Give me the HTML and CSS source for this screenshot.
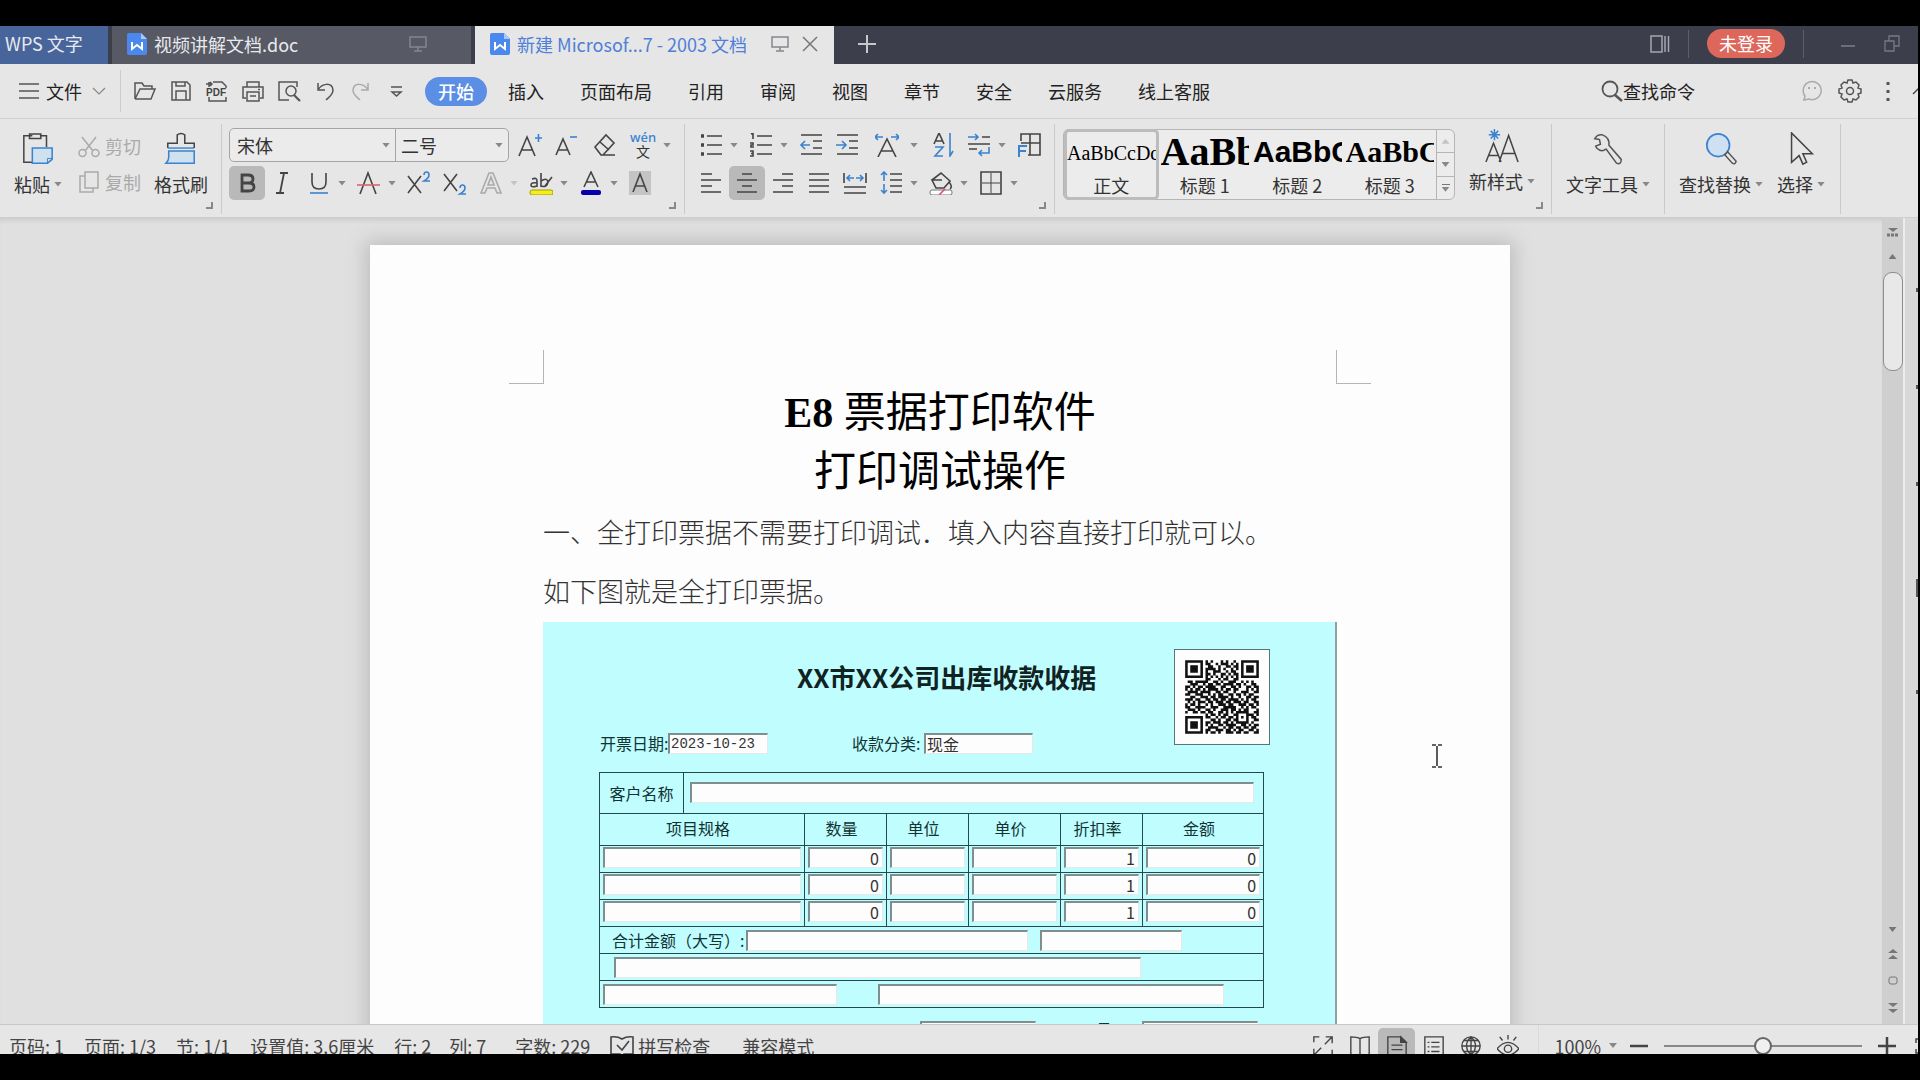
FILE: index.html
```html
<!DOCTYPE html>
<html lang="zh-CN">
<head>
<meta charset="utf-8">
<title>WPS 文字</title>
<link rel="stylesheet" href="styles.css">
</head>
<body>
<div class="app">
  <header class="titlebar">
    <button class="home-tab">WPS 文字</button>
    <div class="doc-tab">
      <svg class="wicon" viewBox="0 0 22 24"><path d="M3 1h12l6 6v14a2 2 0 0 1-2 2H3a2 2 0 0 1-2-2V3a2 2 0 0 1 2-2z" fill="#4a88ee"/><path d="M15 1v6h6z" fill="#a9c8fa"/><path d="M6 10v7l5-4 5 4v-7" fill="none" stroke="#fff" stroke-width="2"/></svg>
      <span class="tab-name">视频讲解文档.doc</span>
      <svg class="mon" viewBox="0 0 18 18"><path d="M1 2h16v10H1zM9 12v4M5 16h8"/></svg>
    </div>
    <div class="doc-tab active">
      <svg class="wicon" viewBox="0 0 22 24"><path d="M3 1h12l6 6v14a2 2 0 0 1-2 2H3a2 2 0 0 1-2-2V3a2 2 0 0 1 2-2z" fill="#4a88ee"/><path d="M15 1v6h6z" fill="#a9c8fa"/><path d="M6 10v7l5-4 5 4v-7" fill="none" stroke="#fff" stroke-width="2"/></svg>
      <span class="tab-name">新建 Microsof...7 - 2003 文档</span>
      <svg class="mon" viewBox="0 0 18 18"><path d="M1 2h16v10H1zM9 12v4M5 16h8"/></svg>
      <button class="plain" aria-label="关闭"><svg class="mon dark" viewBox="0 0 18 18"><path d="M2 2l14 14M16 2L2 16"/></svg></button>
    </div>
    <button class="plain new-tab" aria-label="新建"><svg width="18" height="18" viewBox="0 0 18 18"><path d="M9 0v18M0 9h18" stroke="#c6c7cd" stroke-width="2"/></svg></button>
    <div class="window-tools">
      <svg width="20" height="20" viewBox="0 0 20 20"><path d="M1 2h11v16H1zM15 2v16M18.500 2v16" fill="none" stroke="#a5a7b0" stroke-width="1.500"/></svg>
      <i class="vline"></i>
      <button class="login">未登录</button>
      <i class="vline"></i>
      <button class="plain" aria-label="最小化"><svg width="16" height="18" viewBox="0 0 16 18"><path d="M1 11h14" stroke="#7d7f89" stroke-width="1.500"/></svg></button>
      <button class="plain restore" aria-label="还原"><svg width="16" height="18" viewBox="0 0 16 18"><path d="M1 6h9v10H1zM5 6V1h10v10h-5" fill="none" stroke="#777984" stroke-width="1.300"/></svg></button>
    </div>
  </header>

  <nav class="menubar">
    <button class="file"><svg width="22" height="18" viewBox="0 0 22 18"><path d="M1 2h20M1 9h20M1 16h20" stroke="#555" stroke-width="1.500"/></svg>文件<svg class="chev" width="14" height="9" viewBox="0 0 14 9"><path d="M1 1l6 6 6-6" fill="none" stroke="#888" stroke-width="1.200"/></svg></button>
    <div class="quick">
      <button class="ico" aria-label="打开"><svg viewBox="0 0 24 24"><path d="M2 20V4h7l2 3h8v3M2 20h16l4-10H7L2 20"/></svg></button>
      <button class="ico" aria-label="保存"><svg viewBox="0 0 24 24"><path d="M3 3h15l3 3v15H3zM7 21v-9h10v9M7 3v4h9V3"/></svg></button>
      <button class="ico" aria-label="输出为PDF"><svg viewBox="0 0 24 24"><path d="M8 3h9l4 4v2M4 8V3M1 5h6M5 3l2 2-2 2M4 18v4h17v-4"/><text x="1" y="17" class="pdf">PDF</text></svg></button>
      <button class="ico" aria-label="打印"><svg viewBox="0 0 24 24"><path d="M6 8V3h12v5M5 19H2V8h20v11h-3M6 13h12v9H6zM9 17h6M17 10.500h2"/></svg></button>
      <button class="ico" aria-label="打印预览"><svg viewBox="0 0 24 24"><path d="M20 8V3H2v18h10"/><circle cx="14" cy="12" r="5"/><path d="M17 16l6 6" stroke-width="2.200"/></svg></button>
      <button class="ico" aria-label="撤销"><svg viewBox="0 0 24 24"><path d="M5 4v7h7M5 11C9 4 19 3 20 11c0 5-4 7-7 10"/></svg></button>
      <button class="ico faded" aria-label="重做"><svg viewBox="0 0 24 24"><path d="M19 4v7h-7M19 11C15 4 5 3 4 11c0 5 4 7 7 10"/></svg></button>
      <button class="ico" aria-label="更多"><svg viewBox="0 0 24 24"><path d="M6 8h11M7 13l4.500 4 4.500-4z"/></svg></button>
    </div>
    <div class="tabs">
      <button class="tab on">开始</button><button class="tab">插入</button><button class="tab">页面布局</button><button class="tab">引用</button><button class="tab">审阅</button><button class="tab">视图</button><button class="tab">章节</button><button class="tab">安全</button><button class="tab">云服务</button><button class="tab">线上客服</button>
    </div>
    <button class="search"><svg width="22" height="22" viewBox="0 0 22 22"><circle cx="9" cy="9" r="7.500" fill="none" stroke="#555" stroke-width="1.800"/><path d="M14 15l7 6" stroke="#555" stroke-width="2.500"/></svg>查找命令</button>
    <div class="menu-right">
      <button class="ico faded" aria-label="反馈"><svg viewBox="0 0 24 24"><path d="M4 21l1-4A9 9 0 1 1 9 20z"/><path d="M9 8v2M15 8v2" stroke-width="2"/></svg></button>
      <button class="ico" aria-label="设置"><svg viewBox="0 0 24 24"><path d="M10 1h4l1 3 3-1 3 3-1 3 3 1v4l-3 1 1 3-3 3-3-1-1 3h-4l-1-3-3 1-3-3 1-3-3-1v-4l3-1-1-3 3-3 3 1z"/><circle cx="12" cy="12" r="3.500"/></svg></button>
      <button class="ico" aria-label="更多选项"><svg viewBox="0 0 24 24"><path d="M12 3v3M12 11v3M12 19v3" stroke-width="3"/></svg></button>
      <svg class="edge" width="6" height="12" viewBox="0 0 6 12"><path d="M1 9l6-6" stroke="#444" stroke-width="1.500"/></svg>
    </div>
  </nav>

  <section class="ribbon">
    <div class="group clip">
      <button class="big"><svg viewBox="0 0 36 36"><path d="M12 4H3v28h9M20 4h7v12M9 2h12v5H9z" fill="none" stroke="#444" stroke-width="1.600"/><path d="M12 17h21v12l-5 4H12z" fill="#cfe0ee" stroke="#3b82cf" stroke-width="1.600"/><path d="M28 33v-5h5" fill="none" stroke="#3b82cf"/></svg><span>粘贴<i class="caret"></i></span></button>
      <div class="stack">
        <button class="small"><svg viewBox="0 0 24 24"><path d="M5 3l11 14M19 3L8 17"/><circle cx="5.500" cy="19" r="3.500"/><circle cx="18.500" cy="19" r="3.500"/></svg>剪切</button>
        <button class="small"><svg viewBox="0 0 24 24"><path d="M8 2h13v16H8zM8 6H3v16h13v-4"/></svg>复制</button>
      </div>
      <button class="big brush"><svg viewBox="0 0 36 36"><path d="M4 17v-5h10V3q4-3 8 0v9h10v5" fill="none" stroke="#444" stroke-width="1.600"/><path d="M5 20h27v13H2q3-3 3-6z" fill="#cfe0ee" stroke="#3b82cf" stroke-width="1.600"/><path d="M4 17h28" stroke="#3b82cf" stroke-width="1.500"/></svg><span>格式刷</span></button>
      <i class="launch"></i>
    </div>

    <div class="group font">
      <div class="row">
        <div class="combo">
          <label class="pick name"><select aria-label="字体"><option>宋体</option></select><i class="caret"></i></label>
          <label class="pick size"><select aria-label="字号"><option>二号</option></select><i class="caret"></i></label>
        </div>
        <button class="tool" aria-label="增大字号"><svg viewBox="0 0 24 24"><path d="M1 23L9 4l8 19M4 17h10"/><path class="b" d="M17 5h7M20.500 1v8"/></svg></button>
        <button class="tool" aria-label="减小字号"><svg viewBox="0 0 24 24"><path d="M2 22L9 6l7 16M4 17h10"/><path class="b" d="M16 4h7"/></svg></button>
        <button class="tool eraser" aria-label="清除格式"><svg viewBox="0 0 24 24"><path d="M2 14L13 2l8 8L10 22H8zM7 9l9 8M9 22h13"/></svg></button>
        <button class="tool" aria-label="拼音指南"><span class="pinyin"><small>wén</small><b>文</b></span><i class="caret"></i></button>
      </div>
      <div class="row">
        <button class="tool on" aria-label="加粗"><svg viewBox="0 0 24 24"><path d="M7 4h6q5 0 5 4t-5 4H7zM7 12h7q5 0 5 4t-5 4H7z" stroke-width="2.800"/></svg></button>
        <button class="tool" aria-label="倾斜"><svg viewBox="0 0 24 24"><path d="M9 2h8M5 22h8M13 2L9 22" stroke-width="1.800"/></svg></button>
        <button class="tool" aria-label="下划线"><svg viewBox="0 0 24 24"><path d="M5 2v9q0 7 7 7t7-7V2"/><path class="b" d="M3 22h18"/></svg><i class="caret"></i></button>
        <button class="tool" aria-label="删除线"><svg viewBox="0 0 24 24"><path d="M3 23L11 2l8 21"/><path d="M0 14h23" stroke="#d9666a"/></svg><i class="caret"></i></button>
        <button class="tool" aria-label="上标"><svg viewBox="0 0 24 24"><path d="M1 5l13 17M14 5L1 22"/><path class="b" d="M17 4q0-3 2.500-3T22 4t-5 6h6"/></svg></button>
        <button class="tool" aria-label="下标"><svg viewBox="0 0 24 24"><path d="M1 3l13 17M14 3L1 20"/><path class="b" d="M17 17q0-3 2.500-3t2.500 3-5 6h6"/></svg></button>
        <button class="tool faded" aria-label="文字效果"><svg viewBox="0 0 24 24"><path d="M2 22L10 2h4l8 20h-4l-2-5H8l-2 5zM9 14h6l-3-8z"/></svg><i class="caret"></i></button>
        <button class="tool" aria-label="突出显示"><svg viewBox="0 0 24 24"><path d="M3 8q5-2 5 2v6M8 12q-6-1-6 2t6 1M12 2v14M12 10q6-4 7 1-1 6-7 4M23 6l-7 9"/><rect x="1" y="19" width="23" height="5" rx="2" fill="#f5ee1d" stroke="#a29b00" stroke-width="1"/></svg><i class="caret"></i></button>
        <button class="tool" aria-label="字体颜色"><svg viewBox="0 0 24 24"><path d="M5 16l7-15 7 15M8 11h8"/><rect x="2" y="19" width="20" height="5" rx="2" fill="#0600a8" stroke="none"/></svg><i class="caret"></i></button>
        <button class="tool" aria-label="字符底纹"><svg viewBox="0 0 24 24"><path d="M0 0h22v24H0z" fill="#c4c4c4" stroke="none"/><path d="M4 21l7-18 7 18M6 15h10"/></svg></button>
      </div>
      <i class="launch"></i>
    </div>

    <div class="group para">
      <div class="row">
        <button class="tool" aria-label="项目符号"><svg viewBox="0 0 24 24"><path d="M8 3h15M8 12h15M8 21h15"/><path d="M2 3h3M2 12h3M2 21h3" stroke-width="3.500"/></svg><i class="caret"></i></button>
        <button class="tool" aria-label="编号"><svg viewBox="0 0 24 24"><path d="M8 3h15M8 12h15M8 21h15M2 1l2-1v6M1 10h3v2H2v2h3M1 18h3v5H1M2 20.500h2"/></svg><i class="caret"></i></button>
        <button class="tool" aria-label="减少缩进"><svg viewBox="0 0 24 24"><path d="M2 2h21M14 8h9M14 15h9M2 21h21"/><path class="b" d="M2 12h9M6 8l-4 4 4 4"/></svg></button>
        <button class="tool" aria-label="增加缩进"><svg viewBox="0 0 24 24"><path d="M2 2h21M14 8h9M14 15h9M2 21h21"/><path class="b" d="M1 12h9M7 8l4 4-4 4"/></svg></button>
        <button class="tool wide" aria-label="中文版式"><svg viewBox="0 0 24 24"><path d="M3 24l9-18 9 18M6 18h12"/><path class="b" d="M0 4h8M3 1L0 4l3 3M16 4h8M21 1l3 3-3 3"/></svg><i class="caret"></i></button>
        <button class="tool" aria-label="排序"><svg viewBox="0 0 24 24"><path d="M3 11l5-11 5 11M5 8h6"/><path class="b" d="M4 14h8l-8 9h8M19 0v23l3-5"/></svg></button>
        <button class="tool" aria-label="制表位"><svg viewBox="0 0 24 24"><path d="M15 4h8M1 11h22M2 16h8"/><path class="b" d="M1 4h10M8 1l3 3-3 3M22 14v6H12M15 17l-3 3 3 3"/></svg><i class="caret"></i></button>
        <button class="tool" aria-label="显示标记"><svg viewBox="0 0 24 24"><path d="M4 8V1h19v21H11M4 10h19M13 1v21"/><path class="b" d="M2 24V13h8M2 18h7" stroke-width="2"/></svg></button>
      </div>
      <div class="row">
        <button class="tool" aria-label="左对齐"><svg viewBox="0 0 24 24"><path d="M2 3h11M2 9h20M2 15h11M2 21h20"/></svg></button>
        <button class="tool on" aria-label="居中"><svg viewBox="0 0 24 24"><path d="M7 3h10M2 9h20M7 15h10M2 21h20"/></svg></button>
        <button class="tool" aria-label="右对齐"><svg viewBox="0 0 24 24"><path d="M11 3h11M2 9h20M11 15h11M2 21h20"/></svg></button>
        <button class="tool" aria-label="两端对齐"><svg viewBox="0 0 24 24"><path d="M2 3h20M2 9h20M2 15h20M2 21h20"/></svg></button>
        <button class="tool" aria-label="分散对齐"><svg viewBox="0 0 24 24"><path d="M1 2v10M23 2v10M1 16h22M1 22h22"/><path class="b" d="M4 7h7M7 4L4 7l3 3M13 7h7M17 4l3 3-3 3"/></svg></button>
        <button class="tool" aria-label="行距"><svg viewBox="0 0 24 24"><path d="M11 3h12M11 9h12M11 15h12M11 21h12"/><path class="b" d="M5 1v9M2 4l3-3 3 3M5 13v9M2 19l3 3 3-3"/></svg><i class="caret"></i></button>
        <button class="tool" aria-label="底纹颜色"><svg viewBox="0 0 24 24"><path d="M3 9L12 2l9 8-6 7H7L3 9h10M20 11q4 5 1 7"/><rect x="1" y="19" width="22" height="5" rx="2" fill="#fff" stroke="#777" stroke-width="1"/><path d="M10 24l6-6" stroke="#e0506a"/></svg><i class="caret"></i></button>
        <button class="tool" aria-label="边框"><svg viewBox="0 0 24 24"><path d="M2 1h20v22H2z"/><path d="M12 2v20M3 12h18" stroke-width="1"/></svg><i class="caret"></i></button>
      </div>
      <i class="launch"></i>
    </div>

    <div class="group styles">
      <div class="gallery">
        <button class="style sel"><b class="s0">AaBbCcDd</b><span>正文</span></button>
        <button class="style"><b class="s1">AaBb</b><span>标题 1</span></button>
        <button class="style"><b class="s2">AaBbC</b><span>标题 2</span></button>
        <button class="style"><b class="s3">AaBbC</b><span>标题 3</span></button>
        <div class="gscroll"><button aria-label="上一行"><i class="caret up"></i></button><button aria-label="下一行"><i class="caret"></i></button><button aria-label="展开"><i class="bar"></i><i class="caret"></i></button></div>
      </div>
      <button class="big"><svg viewBox="0 0 36 36"><path d="M1 35l8-20 8 20M4 28h10M15 35L25 7l10 28M18 26h14" fill="none" stroke="#444" stroke-width="1.600"/><path d="M10 0v12M4 6h12M6 2l8 8M14 2l-8 8" stroke="#3b82cf" stroke-width="1.600"/></svg><span>新样式<i class="caret"></i></span></button>
      <i class="launch"></i>
    </div>

    <div class="group">
      <button class="big"><svg viewBox="0 0 36 36"><path d="M12 3a8 8 0 0 0-8 4l5 1 1 5-5 2 1 2q5 5 10 1l11 15q5 2 5-4L19 14q1-8-7-11z" fill="none" stroke="#555" stroke-width="1.600"/></svg><span>文字工具<i class="caret"></i></span></button>
    </div>

    <div class="group find">
      <button class="big"><svg viewBox="0 0 36 36"><circle cx="15" cy="14" r="12" fill="#cfe0f2" stroke="#3b82cf" stroke-width="1.800"/><path d="M22 24l3-3 9 10q-1 4-4 2z" fill="none" stroke="#555" stroke-width="1.500"/></svg><span>查找替换<i class="caret"></i></span></button>
      <button class="big pick-btn"><svg viewBox="0 0 36 36"><path d="M8 1v31l8-7 4 9 4-2-4-9h10z" fill="none" stroke="#444" stroke-width="1.600"/></svg><span>选择<i class="caret"></i></span></button>
    </div>
  </section>

  <main class="work">
    <div class="canvas">
      <article class="page">
        <div class="corners"><i class="cl"></i><i class="cr"></i></div>
        <h1><b>E8</b> 票据打印软件<br>打印调试操作</h1>
        <p>一、全打印票据不需要打印调试．填入内容直接打印就可以。</p>
        <p>如下图就是全打印票据。</p>
        <section class="receipt">
          <div class="rhead">
            <div class="rinfo">
              <h2>XX市XX公司出库收款收据</h2>
              <div class="fields">
                <label for="date">开票日期:</label><input id="date" class="date" value="2023-10-23">
                <label for="kind" class="second">收款分类:</label><input id="kind" class="kind" value="现金">
              </div>
            </div>
            <svg class="qr" viewBox="-4 -4 37 37" aria-label="二维码"><path id="qr" fill="#111"/></svg>
          </div>
          <table>
            <colgroup><col class="c1"><col class="c2"><col class="c3"><col class="c4"><col class="c5"><col class="c6"><col class="c7"></colgroup>
            <tr class="cust"><th><label for="cust">客户名称</label></th><td colspan="6"><input id="cust"></td></tr>
            <tr class="heads"><th colspan="2">项目规格</th><th>数量</th><th>单位</th><th>单价</th><th>折扣率</th><th>金额</th></tr>
            <tr class="item"><td colspan="2"><input aria-label="项目规格"></td><td><input aria-label="数量" value="0"></td><td><input aria-label="单位"></td><td><input aria-label="单价"></td><td><input aria-label="折扣率" value="1"></td><td><input aria-label="金额" value="0"></td></tr>
            <tr class="item"><td colspan="2"><input aria-label="项目规格"></td><td><input aria-label="数量" value="0"></td><td><input aria-label="单位"></td><td><input aria-label="单价"></td><td><input aria-label="折扣率" value="1"></td><td><input aria-label="金额" value="0"></td></tr>
            <tr class="item"><td colspan="2"><input aria-label="项目规格"></td><td><input aria-label="数量" value="0"></td><td><input aria-label="单位"></td><td><input aria-label="单价"></td><td><input aria-label="折扣率" value="1"></td><td><input aria-label="金额" value="0"></td></tr>
            <tr><td colspan="7"><div class="line total"><label for="sum">合计金额（大写）:</label><input id="sum"><input class="num" aria-label="合计"></div></td></tr>
            <tr><td colspan="7"><div class="line note"><input aria-label="备注"></div></td></tr>
            <tr><td colspan="7"><div class="line last"><input aria-label="单位名称"><input class="addr" aria-label="地址"></div></td></tr>
          </table>
          <div class="foot"><input aria-label="收款人"><label for="clerk">员:</label><input id="clerk"></div>
        </section>
      </article>
      <svg class="cursor" width="12" height="24" viewBox="0 0 12 24"><path d="M1 1h4M7 1h4M6 2v20M1 23h4M7 23h4" stroke="#333" stroke-width="1.600"/></svg>
    </div>
    <div class="scroll">
      <svg width="12" height="10" viewBox="0 0 12 10"><path d="M1 0h10L6 4z" fill="#777"/><path d="M0 7h12" stroke="#777" stroke-width="3" stroke-dasharray="3 1"/></svg>
      <i class="caret up"></i>
      <div class="thumb"></div>
      <i class="caret down"></i>
      <svg width="10" height="12" viewBox="0 0 10 12"><path d="M0 5l5-4 5 4zM0 11l5-4 5 4z" fill="#777"/></svg>
      <svg width="10" height="10" viewBox="0 0 10 10"><rect x="1" y="1" width="8" height="7" rx="2" fill="none" stroke="#777"/></svg>
      <svg width="10" height="12" viewBox="0 0 10 12"><path d="M0 1l5 4 5-4zM0 7l5 4 5-4z" fill="#777"/></svg>
    </div>
    <aside class="side"><i></i><i></i><i></i><i class="tall"></i><i></i></aside>
  </main>

  <footer class="status">
    <div class="info">
      <span>页码: 1</span><span>页面: 1/3</span><span>节: 1/1</span><span>设置值: 3.6厘米</span><span>行: 2</span><span class="col">列: 7</span><span>字数: 229</span>
      <span class="spell"><svg width="24" height="22" viewBox="0 0 24 22"><path d="M12 4Q7 1 1 2v17h9l2 2 2-2h9V2q-6-1-11 2zM7 10l5 5 7-9" fill="none" stroke="#444" stroke-width="1.600"/></svg>拼写检查</span><span class="compat">兼容模式</span>
    </div>
    <div class="views">
      <button class="view" aria-label="全屏显示"><svg viewBox="0 0 24 24"><path d="M2 8V2h6M14 10l8-8M15 2h7v7M10 14l-8 8M2 15v7h7M16 22h6v-6"/></svg></button>
      <button class="view" aria-label="阅读版式"><svg viewBox="0 0 24 24"><path d="M12 4Q9 2 2 2v20h8l2 1 2-1h8V2q-7 0-10 2v19"/></svg></button>
      <button class="view on" aria-label="页面视图"><svg viewBox="0 0 24 24"><path d="M2 2h14l6 6v14H2zM6 11h12M6 16h12"/><path d="M16 2v6h6z" fill="#444"/></svg></button>
      <button class="view" aria-label="大纲"><svg viewBox="0 0 24 24"><path d="M2 2h20v20H2zM5 8h2M9 8h9M5 13h2M9 13h9M5 18h2M9 18h9"/></svg></button>
      <button class="view" aria-label="Web版式"><svg viewBox="0 0 24 24"><circle cx="12" cy="12" r="10"/><path d="M12 2v20M2 12h20M4 6h16M4 18h16M12 2q-10 10 0 20M12 2q10 10 0 20"/></svg></button>
      <button class="view" aria-label="护眼模式"><svg viewBox="0 0 24 24"><path d="M0 15q12-14 24 0-12 14-24 0zM12 0v5M3 2l3 4M21 2l-3 4"/><circle cx="12" cy="15" r="4"/></svg></button>
    </div>
    <div class="zoom">
      <button class="pct">100%<i class="caret"></i></button>
      <button class="plain" aria-label="缩小"><svg width="18" height="18" viewBox="0 0 18 18"><path d="M0 9h18" stroke="#444" stroke-width="2.500"/></svg></button>
      <input type="range" min="0" max="100" value="50" aria-label="显示比例">
      <button class="plain" aria-label="放大"><svg width="18" height="18" viewBox="0 0 18 18"><path d="M0 9h18M9 0v18" stroke="#444" stroke-width="2.500"/></svg></button>
      <svg class="frag" width="3" height="18" viewBox="0 0 3 18"><path d="M3 2H1v4M1 12v4h2" fill="none" stroke="#444" stroke-width="1.500"/></svg>
    </div>
  </footer>
</div>
<script src="qr.js"></script>
</body>
</html>
```
FILE: styles.css
```css
* { box-sizing: border-box; }
body { margin: 0; background: #000; overflow: hidden; font-family: "Noto Sans CJK SC", sans-serif; font-size: 18px; line-height: 24px; color: #333; }
button { font: inherit; color: inherit; background: none; border: 0; padding: 0; margin: 0; white-space: nowrap; }
input, select { font: inherit; color: inherit; margin: 0; }
svg { flex: none; }
.app { margin: 26px 2px 26px 0; height: calc(100vh - 52px); display: flex; flex-direction: column; overflow: hidden; background: #e6e6e6; }
.plain, .ico, .tool, .view { display: flex; align-items: center; justify-content: center; }
.caret { flex: none; width: 8px; height: 5px; background: #888; clip-path: polygon(0 0, 100% 0, 50% 100%); }
.caret.up { clip-path: polygon(0 100%, 100% 100%, 50% 0); }

/* title bar */
.titlebar { flex: none; height: 38px; display: flex; align-items: stretch; gap: 4px; background: #3c3e4b; color: #e8e9ee; }
.home-tab { width: 108px; padding: 0 20px 4px 0; background: #47659b; text-align: center; }
.doc-tab { width: 359px; display: flex; align-items: center; gap: 6px; padding: 0 44px 3px 14px; background: #575964; }
.doc-tab.active { padding: 0 14px 3px; background: #e6e6e6; color: #4f7fd8; }
.active .tab-name { flex: none; }
.wicon { width: 22px; height: 24px; }
.tab-name { flex: 1; white-space: nowrap; }
.mon { display: block; width: 18px; height: 18px; fill: none; stroke: #85868f; stroke-width: 1.5; }
.active > .mon { margin-left: 18px; }
.active > .plain { margin-left: 6px; }
.mon.dark { stroke: #777; }
.new-tab { width: 58px; padding-bottom: 3px; }
.window-tools { margin-left: auto; display: flex; align-items: center; gap: 18px; padding: 0 18px 3px 0; }
.vline { width: 1px; height: 28px; background: #5c5e69; }
.login { width: 78px; height: 29px; padding-bottom: 2px; border-radius: 15px; background: #de675c; color: #fff; }
.window-tools .plain { margin-left: 18px; }
.window-tools .restore { margin-left: 10px; }

/* menu bar */
.menubar { flex: none; height: 55px; display: flex; align-items: center; border-bottom: 1px solid #d0d0d0; color: #222; }
.file { width: 121px; height: 42px; display: flex; align-items: center; gap: 6px; padding-left: 18px; border-right: 1px solid #ccc; }
.chev { margin-left: 4px; }
.quick { display: flex; padding-left: 6px; }
.ico { width: 36px; height: 36px; }
.ico svg, .view svg { width: 24px; height: 24px; fill: none; stroke: #555; stroke-width: 1.5; }
.ico.faded svg { stroke: #aaa; }
.pdf { font: bold 10px "Liberation Sans", sans-serif; fill: #444; stroke: none; }
.tabs { display: flex; padding-left: 5px; }
.tab { padding: 2px 18px 3px; }
.tab.on { margin: 0 3px 0 5px; padding: 2px 13px 3px; border-radius: 15px; background: #5b8fe6; color: #fff; font-weight: 500; }
.search { display: flex; align-items: center; margin-left: auto; margin-right: 99px; }
.menu-right { display: flex; align-items: center; gap: 2px; }
.edge { margin-left: 4px; }

/* ribbon */
.ribbon { flex: none; height: 99px; display: flex; padding-left: 8px; border-bottom: 1px solid #cfcfcf; }
.group { position: relative; display: flex; padding: 8px; margin: 5px 0 3px; border-right: 1px solid #cacaca; }
.launch { position: absolute; right: 8px; bottom: 5px; width: 7px; height: 7px; border: solid #888; border-width: 0 2px 2px 0; }
.big { display: flex; flex-direction: column; align-items: center; gap: 6px; padding: 0 6px; }
.big svg { width: 34px; height: 34px; }
.big span { display: flex; align-items: center; gap: 4px; }
.clip { width: 214px; padding-left: 0; padding-right: 0; }
.stack { display: flex; flex-direction: column; gap: 12px; padding: 2px 7px 0 9px; }
.small { display: flex; align-items: center; gap: 4px; color: #aaa; }
.small svg { width: 24px; height: 24px; fill: none; stroke: #aaa; stroke-width: 1.5; }
.font, .para { flex-direction: column; gap: 2px; padding: 3px 8px 0; }
.font { width: 463px; padding-left: 7px; }
.para { width: 370px; }
.row { display: flex; align-items: center; height: 36px; }
.tool { flex: none; height: 34px; border-radius: 5px; }
.tool svg { width: 24px; height: 24px; margin: 0 6px; fill: none; stroke: #444; stroke-width: 1.6; }
.tool .b { stroke: #3b82cf; }
.tool .caret { margin: 0 5px 0 1px; }
.tool.on { background: #b9b9b9; }
.tool.faded svg { stroke: #aaa; }
.tool.faded .caret { background: #c4c4c4; }
.tool.wide svg { margin: 0 10px; }
.tool.wide .caret { margin-right: 7px; }
.eraser { margin: 0 4px 0 3px; }
.pinyin { display: flex; flex-direction: column; align-items: center; width: 32px; margin-right: 3px; }
.pinyin small { font: 500 13px/13px "Noto Sans", sans-serif; color: #3b82cf; }
.pinyin b { font-size: 14px; line-height: 15px; font-weight: 400; }
.combo { display: flex; width: 280px; height: 34px; margin-right: 3px; border: 1px solid #a5a5a5; border-radius: 5px; background: #ebebeb; }
.pick { display: flex; align-items: center; padding: 0 5px 0 7px; }
.pick.name { flex: 3; border-right: 1px solid #a5a5a5; }
.pick.size { flex: 2; padding-left: 5px; }
.pick select { flex: 1; min-width: 0; appearance: none; border: 0; padding: 0; background: none; }
.styles { width: 497px; padding: 5px 8px; }
.gallery { display: flex; width: 392px; height: 71px; margin-right: 8px; border: 1px solid #b5b5b5; border-radius: 6px; background: #ececec; }
.style { flex: 1; min-width: 0; display: flex; flex-direction: column; overflow: hidden; margin: 0 2px; text-align: center; }
.style b { height: 43px; line-height: 44px; overflow: hidden; text-align: left; color: #000; }
.style.sel { border: 3px solid #bcbcbc; border-radius: 5px; margin: -1px 0; }
.style.sel b { height: 41px; line-height: 42px; }
.s0 { font-family: "Liberation Serif", serif; font-size: 20px; font-weight: 400; }
.s1, .s3 { font-family: "Liberation Serif", serif; font-size: 40px; }
.s2 { font-family: "Liberation Sans", sans-serif; font-size: 30px; }
.style .s3 { font-size: 30px; }
.gscroll { width: 18px; display: flex; flex-direction: column; border-left: 1px solid #b5b5b5; }
.gscroll button { flex: 1; display: flex; flex-direction: column; align-items: center; justify-content: center; gap: 2px; border-bottom: 1px solid #b5b5b5; }
.gscroll button:last-child { border-bottom: 0; }
.gscroll .up { background: #c4c4c4; }
.bar { width: 8px; height: 1px; background: #777; }
.find { padding-right: 9px; }
.find .pick-btn { margin-left: 2px; }

/* document */
.work { flex: 1; min-height: 0; display: flex; overflow: hidden; background: #e0e0e0; }
.canvas { position: relative; flex: 1; min-width: 0; padding: 27px 2px 0 0; display: flex; justify-content: center; align-items: flex-start; box-shadow: inset 0 5px 5px -3px #c8c8c8; }
.page { width: 1140px; min-height: 1600px; padding: 105px 139px 0; background: #fdfdfd; box-shadow: 0 0 18px 4px #bcbcbc; }
.corners { display: flex; justify-content: space-between; }
.corners i { width: 35px; height: 34px; border: solid #b5b5b5; border-width: 0 1px 1px 0; }
.corners .cr { border-width: 0 0 1px 1px; }
.page h1, .page p, .receipt { margin: 0 34px; }
.page h1 { text-align: center; color: #000; font: 400 42px/59px "Liberation Serif", "Noto Sans CJK SC", serif; }
.page h1 b { font-weight: 700; }
.page p { font-size: 27px; line-height: 59px; font-weight: 300; color: #333; white-space: nowrap; }
.cursor { position: absolute; left: 1431px; top: 526px; }
.page .receipt { margin-top: 2px; }
.receipt { height: 1000px; padding: 0 73px 0 56px; border-right: 2px solid #94a0a0; background: #bffdff; color: #133; font-size: 16px; }
.rhead { display: flex; height: 150px; margin-right: -8px; }
.rinfo { flex: 1; padding-top: 37px; }
.rinfo h2 { margin: 0 0 36px; padding-left: 198px; font-size: 26px; line-height: 36px; font-weight: 600; white-space: nowrap; color: #122; }
.fields { display: flex; align-items: center; padding-left: 1px; }
.fields label { width: 68px; white-space: nowrap; }
.fields .second { width: 72px; margin-left: 84px; }
.receipt input { height: 21px; min-width: 0; padding: 0 3px; border: 1px solid #e8e8e8; border-width: 2px 1px 1px 2px; border-color: #7f8f90 #e8e8e8 #e8e8e8 #7f8f90; border-radius: 0; background: #fdfdfd; color: #333; }
.receipt .date { width: 100px; padding: 0 1px; font: 14px "Liberation Mono", monospace; }
.receipt .kind { width: 109px; padding: 0 1px; }
.qr { width: 96px; height: 96px; margin-top: 27px; border: 1px solid #577; background: #fdfdfd; }
.receipt table { width: 100%; table-layout: fixed; border-collapse: collapse; line-height: 20px; }
.receipt td, .receipt th { height: 27px; padding: 0 3px; border: 1px solid #244a4c; font-weight: 400; }
.receipt td input { display: block; width: 100%; text-align: right; }
.receipt .item td { padding-top: 1px; vertical-align: top; }
.receipt .cust th { height: 41px; }
.receipt .cust td { padding: 0 9px 2px 6px; }
.receipt .heads th { height: 32px; padding: 0 10px 3px 2px; }
.c1 { width: 84px; } .c2 { width: 121px; } .c3, .c4, .c6 { width: 82px; } .c5 { width: 92px; } .c7 { width: 121px; }
.line { display: flex; align-items: center; }
.receipt .total label { width: 143px; padding-left: 9px; white-space: nowrap; }
.receipt .total #sum { width: 282px; }
.receipt .total .num { width: 142px; margin-left: 12px; }
.receipt .note input { width: 527px; margin-left: 11px; }
.receipt .last input { width: 234px; }
.receipt .last .addr { width: 346px; margin-left: 41px; }
.foot { display: flex; margin-top: 13px; padding-left: 321px; line-height: 16px; }
.foot input { width: 116px; }
.foot label { width: 106px; padding-left: 60px; }

/* scroll bar and side strip */
.scroll { width: 21px; display: flex; flex-direction: column; align-items: center; gap: 16px; padding: 10px 0; background: #cfcfcf; }
.thumb { width: 20px; height: 99px; margin-top: -3px; border: 1px solid #8d8d8d; border-radius: 9px; background: #e8e8e8; }
.scroll .caret { background: #777; }
.scroll .down { margin-top: auto; }
.side { width: 15px; display: flex; flex-direction: column; align-items: flex-end; justify-content: space-between; padding: 70px 0 330px; border-left: 2px solid #ececec; background: #d8d8d8; }
.side i { width: 2px; height: 4px; background: #555; }
.side .tall { height: 18px; }

/* status bar */
.status { flex: none; height: 30px; display: flex; align-items: flex-start; overflow: hidden; border-top: 1px solid #c8c8c8; color: #444; }
.info, .views, .zoom { display: flex; align-items: center; height: 41px; white-space: nowrap; }
.info { gap: 20px; padding-left: 9px; }
.info .col { margin: 0 9px 0 -2px; }
.spell { display: flex; align-items: center; gap: 4px; }
.compat { margin-left: 12px; }
.views { margin-left: auto; padding-right: 12px; border-right: 1px solid #dadada; }
.view { width: 37px; height: 36px; border-radius: 5px; }
.view svg { width: 22px; height: 22px; stroke: #444; }
.view.on { background: #b9b9b9; }
.zoom { padding-left: 15px; }
.pct { display: flex; align-items: center; gap: 8px; margin-right: 13px; }
.zoom input { appearance: none; width: 198px; height: 18px; margin: 0 16px; background: linear-gradient(#888, #888) center / 100% 2px no-repeat; }
.zoom input::-webkit-slider-thumb { appearance: none; width: 18px; height: 18px; border: 2px solid #666; border-radius: 50%; background: #f0f0f0; }
.frag { margin-left: 19px; }
```
FILE: qr.js
```js
// Module rows of the receipt's QR code, top to bottom.
const rows = [
  "11111110101000101001001111111",
  "10000010110010111010101000001",
  "10111010011001001101101011101",
  "10111010111101010010101011101",
  "10111010100111001011001011101",
  "10000010110100110101101000001",
  "11111110101010101010101111111",
  "00000000110001011001100000000",
  "01101111100110100111001010100",
  "00111001011011011110110100110",
  "11010110111100110011010011011",
  "10101101011110101101100010101",
  "01111011110011011001001110011",
  "11001110010101100110110101100",
  "00110011101101111010010011011",
  "11101100110110110111101010110",
  "01010111011011101101110110011",
  "10110100101001110110011101101",
  "11001111001110011111001010110",
  "01110100110100111011010110001",
  "10011011011001101010111110011",
  "00000000101101011001100011101",
  "11111110110010110110101010110",
  "10000010001101001101100010011",
  "10111010110111011010111110100",
  "10111010101001101111001101011",
  "10111010011110010110110110110",
  "10000010110011101101011001101",
  "11111110101101001110110110011"
];
let d = "";
rows.forEach((row, y) => {
  for (const run of row.matchAll(/1+/g)) d += `M${run.index} ${y}h${run[0].length}v1h-${run[0].length}z`;
});
document.getElementById("qr").setAttribute("d", d);
```
